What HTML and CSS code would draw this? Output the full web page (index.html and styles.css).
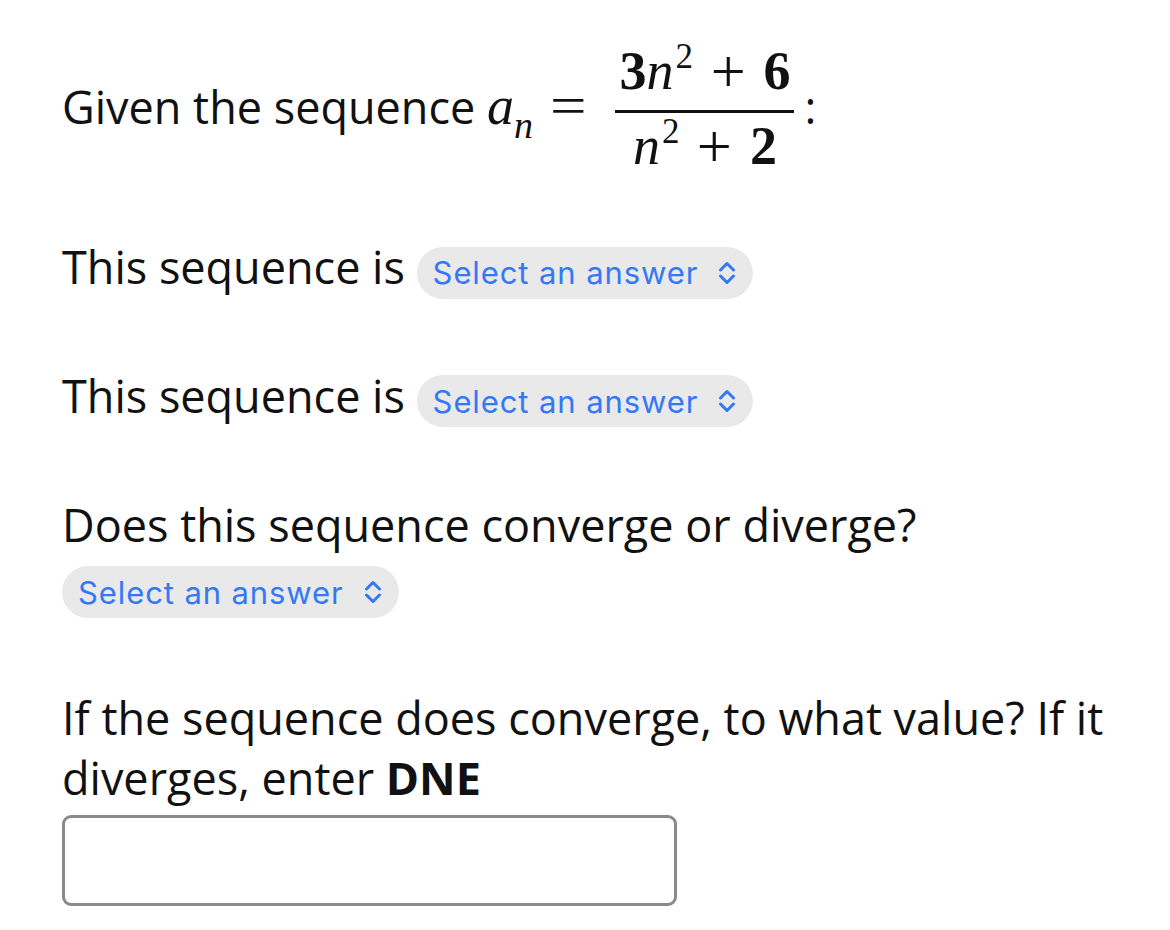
FILE: index.html
```html
<!DOCTYPE html>
<html>
<head>
<meta charset="utf-8">
<link rel="stylesheet" href="styles.css">
</head>
<body>
<div class="page">
  <p class="q q-first">Given the sequence <span class="math"><span class="mi">a</span><span class="mi sub">n</span><span class="eq">=</span><span class="frac"><span class="num">3<span class="mi">n</span><sup>2</sup><span class="op">+</span>6</span><span class="den"><span class="mi">n</span><sup>2</sup><span class="op">+</span>2</span></span></span>:</p>

  <p class="q q-2">This sequence is <span class="select">Select an answer<svg class="chev" viewBox="0 0 16 24" width="16" height="24"><path d="M1.5 9 L8 2.5 L14.5 9 M1.5 15 L8 21.5 L14.5 15" fill="none" stroke="#3478f6" stroke-width="3" stroke-linecap="round" stroke-linejoin="round"/></svg></span></p>

  <p class="q q-3">This sequence is <span class="select">Select an answer<svg class="chev" viewBox="0 0 16 24" width="16" height="24"><path d="M1.5 9 L8 2.5 L14.5 9 M1.5 15 L8 21.5 L14.5 15" fill="none" stroke="#3478f6" stroke-width="3" stroke-linecap="round" stroke-linejoin="round"/></svg></span></p>

  <div class="q q-4">
    <p class="q">Does this sequence converge or diverge?</p>
    <div class="select select-block">Select an answer<svg class="chev" viewBox="0 0 16 24" width="16" height="24"><path d="M1.5 9 L8 2.5 L14.5 9 M1.5 15 L8 21.5 L14.5 15" fill="none" stroke="#3478f6" stroke-width="3" stroke-linecap="round" stroke-linejoin="round"/></svg></div>
  </div>

  <p class="q q-5">If the sequence does converge, to what value? If it diverges, enter <b>DNE</b></p>
  <div class="answer-box"></div>
</div>
</body>
</html>
```

FILE: styles.css
```css
html, body {
  margin: 0;
  padding: 0;
  background: #ffffff;
}
.page {
  padding: 0 40px 0 62px;
  font-family: "Open Sans", sans-serif;
  font-size: 45px;
  line-height: 60px;
  color: #111111;
}
.q {
  margin: 0;
}
.q-first {
  margin-top: 45px;
  height: 133px;
  white-space: nowrap;
}
.math {
  font-family: "Liberation Serif", "DejaVu Serif", serif;
  font-size: 54px;
}
.mi {
  font-style: italic;
}
.sub {
  font-size: 38px;
  position: relative;
  top: 14px;
  margin-left: 0;
}
.eq {
  display: inline-block;
  transform: scaleX(1.2);
  margin: 0 32px 0 20px;
}
.frac {
  display: inline-flex;
  flex-direction: column;
  align-items: center;
  vertical-align: 35px;
  margin: 0 10px 0 0;
}
.num, .den {
  line-height: 52px;
  font-weight: bold;
  white-space: nowrap;
}
.num .mi, .den .mi {
  font-weight: normal;
}
.num {
  border-bottom: 3px solid #111;
  padding: 0 4px 13px;
}
.den {
  padding-top: 7px;
}
.frac sup {
  font-size: 35px;
  line-height: 0;
  vertical-align: 21px;
  font-weight: normal;
  margin-left: 2px;
}
.op {
  display: inline-block;
  transform: scale(1.15);
  margin: 0 20px;
  font-weight: normal;
}
.q-2 {
  margin-top: 59px;
}
.q-3 {
  margin-top: 67px;
}
.select {
  display: inline-flex;
  align-items: center;
  gap: 21px;
  height: 52px;
  padding: 0 18px 0 16px;
  border-radius: 26px;
  background: #e9e9e9;
  color: #3478f6;
  font-family: Inter, "Liberation Sans", sans-serif;
  font-size: 31px;
  letter-spacing: 0.9px;
  vertical-align: baseline;
  box-sizing: border-box;
  line-height: 1;
}
.chev {
  display: block;
}
.q-4 {
  margin-top: 68px;
}
.select-block {
  display: flex;
  width: fit-content;
  margin-top: 11px;
}
.q-5 {
  margin-top: 70px;
}
.answer-box {
  width: 615px;
  height: 91px;
  border: 3px solid #8a8a8a;
  border-radius: 9px;
  box-sizing: border-box;
  margin-top: 7px;
}
```
